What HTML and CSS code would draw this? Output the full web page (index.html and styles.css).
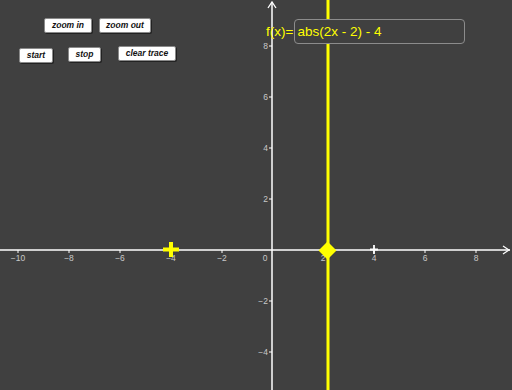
FILE: index.html
```html
<!DOCTYPE html>
<html lang="en">
<head>
    <meta charset="UTF-8">
    <title>Graph trace</title>
    <link rel="stylesheet" href="styles.css">
</head>
<body>
    <div class="board">
        <svg class="graph" width="512" height="390" viewBox="0 0 512 390">
            <!-- axes -->
            <line class="axis" x1="0" y1="250" x2="510" y2="250"/>
            <line class="axis" x1="272" y1="2" x2="272" y2="390"/>
            <polyline class="arrow" points="503,246 509,250 503,254"/>
            <polyline class="arrow" points="268,8 272,2 276,8"/>

            <!-- x ticks -->
            <g class="tick">
                <line x1="18" y1="250" x2="18" y2="253"/>
                <line x1="69" y1="250" x2="69" y2="253"/>
                <line x1="120" y1="250" x2="120" y2="253"/>
                <line x1="171" y1="250" x2="171" y2="253"/>
                <line x1="222" y1="250" x2="222" y2="253"/>
                <line x1="323" y1="250" x2="323" y2="253"/>
                <line x1="374" y1="250" x2="374" y2="253"/>
                <line x1="425" y1="250" x2="425" y2="253"/>
                <line x1="476" y1="250" x2="476" y2="253"/>
                <line x1="269" y1="46" x2="272" y2="46"/>
                <line x1="269" y1="97" x2="272" y2="97"/>
                <line x1="269" y1="148" x2="272" y2="148"/>
                <line x1="269" y1="199" x2="272" y2="199"/>
                <line x1="269" y1="301" x2="272" y2="301"/>
                <line x1="269" y1="352" x2="272" y2="352"/>
            </g>
            <g class="label">
                <text x="18" y="261">−10</text>
                <text x="69" y="261">−8</text>
                <text x="120" y="261">−6</text>
                <text x="171" y="261">−4</text>
                <text x="222" y="261">−2</text>
                <text x="265" y="261">0</text>
                <text x="323" y="261">2</text>
                <text x="374" y="261">4</text>
                <text x="425" y="261">6</text>
                <text x="476" y="261">8</text>
            </g>
            <g class="label label-y">
                <text x="268" y="49">8</text>
                <text x="268" y="100">6</text>
                <text x="268" y="151">4</text>
                <text x="268" y="202">2</text>
                <text x="268" y="304">−2</text>
                <text x="268" y="355">−4</text>
            </g>

            <!-- trace line and points -->
            <line class="trace" x1="328" y1="0" x2="328" y2="390"/>
            <path class="cross" d="M163 249.5 H179 M171 242 V257"/>
            <path class="cross-small" d="M370 249.5 H378 M374 245 V254"/>
            <polygon class="point" points="327.5,241.5 336.5,250.5 327.5,259.5 318.5,250.5"/>
        </svg>

        <button class="btn btn-zoom-in">zoom in</button>
        <button class="btn btn-zoom-out">zoom out</button>
        <button class="btn btn-start">start</button>
        <button class="btn btn-stop">stop</button>
        <button class="btn btn-clear">clear trace</button>

        <div class="func-field">
            <label for="fx">f(x)=</label>
            <input type="text" id="fx" value="abs(2x - 2) - 4">
        </div>
    </div>
</body>
</html>
```

FILE: styles.css
```css
* {
    margin: 0;
    padding: 0;
    box-sizing: border-box;
}

body {
    background: #404040;
    font-family: 'Liberation Sans', Arial, sans-serif;
    overflow: hidden;
}

.board { position: relative; width: 512px; height: 390px; background: #404040; }
.graph { display: block; }

.axis { stroke: #fff; stroke-width: 1.5; }
.arrow { fill: none; stroke: #fff; stroke-width: 1.3; }
.tick line { stroke: #fff; stroke-width: 1; }
.label text { fill: #c8c8c8; font-size: 8.5px; text-anchor: middle; font-family: 'Liberation Sans', Arial, sans-serif; }
.label-y text { text-anchor: end; }

.trace { stroke: #ffff00; stroke-width: 3; }
.cross { stroke: #ffff00; stroke-width: 4; fill: none; }
.cross-small { stroke: #fff; stroke-width: 1.8; fill: none; }
.point { fill: #ffff00; }

/* buttons sit on top of the graphics view */
.btn { position: absolute; height: 15px; background: #fff; color: #111; border: 1px solid #8a8a8a; border-radius: 2px; box-shadow: 1px 1px 0 #222; font-family: 'Liberation Sans', Arial, sans-serif; font-size: 8.5px; font-weight: bold; font-style: italic; line-height: 13px; text-align: center; cursor: pointer; }
.btn-zoom-in { left: 44px; top: 18px; width: 48px; }
.btn-zoom-out { left: 99px; top: 18px; width: 52px; }
.btn-start { left: 19px; top: 48px; width: 34px; }
.btn-stop { left: 68px; top: 47px; width: 33px; }
.btn-clear { left: 118px; top: 46px; width: 58px; }

.func-field { position: absolute; left: 266px; top: 19px; display: flex; align-items: center; gap: 1px; color: #ffff00; font-size: 13.5px; }
.func-field label { line-height: 25px; }
.func-field input { width: 171px; height: 25px; background: #404040; border: 1px solid #8c8c8c; border-radius: 4px; color: #ffff00; font-family: 'Liberation Sans', Arial, sans-serif; font-size: 13.5px; padding: 0 2px; outline: none; }
```
